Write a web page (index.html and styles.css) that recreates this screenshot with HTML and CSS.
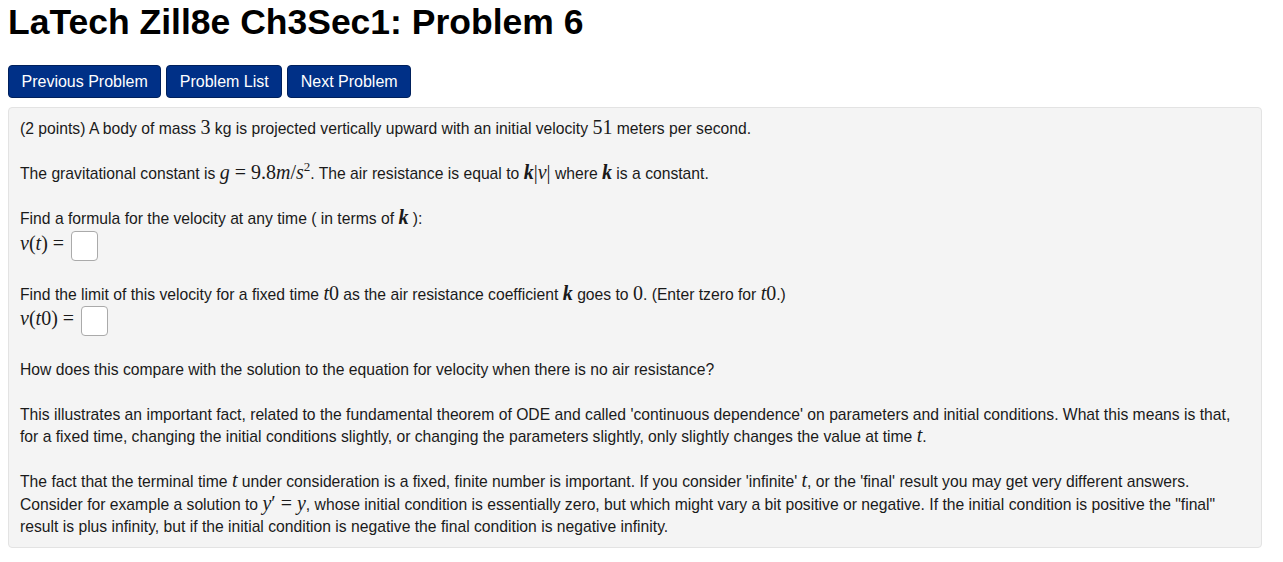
FILE: index.html
```html
<!DOCTYPE html>
<html lang="en">
<head>
  <meta charset="UTF-8" />
  <title>LaTech Zill8e Ch3Sec1: Problem 6</title>
  <link rel="stylesheet" href="styles.css">
</head>
<body>
  <h1 class="title">LaTech Zill8e Ch3Sec1: Problem 6</h1>

  <div class="nav">
    <a class="nav-btn" href="#">Previous Problem</a>
    <a class="nav-btn" href="#">Problem List</a>
    <a class="nav-btn" href="#">Next Problem</a>
  </div>

  <div class="problem">
    <p>(2 points) A body of mass <span class="m">3</span> kg is projected vertically upward with an initial velocity <span class="m">51</span> meters per second.</p>

    <p>The gravitational constant is <span class="m"><i>g</i><span class="eq">=</span>9.8<i>m</i>/<i>s</i><sup>2</sup></span>. The air resistance is equal to <span class="m"><b><i>k</i></b>|<i>v</i>|</span> where <span class="m"><b><i>k</i></b></span> is a constant.</p>

    <p>Find a formula for the velocity at any time ( in terms of <span class="m"><b><i>k</i></b></span> ):<br>
      <span class="m"><i>v</i>(<i>t</i>)<span class="eq">=</span></span><input class="answer" type="text"></p>

    <p>Find the limit of this velocity for a fixed time <span class="m"><i>t</i>0</span> as the air resistance coefficient <span class="m"><b><i>k</i></b></span> goes to <span class="m">0</span>. (Enter tzero for <span class="m"><i>t</i>0</span>.)<br>
      <span class="m"><i>v</i>(<i>t</i>0)<span class="eq">=</span></span><input class="answer" type="text"></p>

    <p>How does this compare with the solution to the equation for velocity when there is no air resistance?</p>

    <p>This illustrates an important fact, related to the fundamental theorem of ODE and called 'continuous dependence' on parameters and initial conditions. What this means is that, for a fixed time, changing the initial conditions slightly, or changing the parameters slightly, only slightly changes the value at time <span class="m"><i>t</i></span>.</p>

    <p>The fact that the terminal time <span class="m"><i>t</i></span> under consideration is a fixed, finite number is important. If you consider 'infinite' <span class="m"><i>t</i></span>, or the 'final' result you may get very different answers. Consider for example a solution to <span class="m"><i>y</i>&prime;<span class="eq">=</span><i>y</i></span>, whose initial condition is essentially zero, but which might vary a bit positive or negative. If the initial condition is positive the "final" result is plus infinity, but if the initial condition is negative the final condition is negative infinity.</p>
  </div>
</body>
</html>
```

FILE: styles.css
```css
body {
  font-family: "Liberation Sans", Arial, sans-serif;
  margin: 0;
  padding: 0 8px;
  background: #fff;
  color: #1a1a1a;
}
.title {
  font-size: 35.5px;
  font-weight: bold;
  color: #000;
  margin: 0;
  padding-top: 2px;
  line-height: 40px;
}
.nav {
  display: flex;
  gap: 5px;
  margin-top: 23px;
}
.nav-btn {
  display: block;
  background: #003087;
  color: #fff;
  text-decoration: none;
  font-size: 16px;
  line-height: 19px;
  padding: 6px 12.5px;
  border: 1px solid #00205c;
  border-radius: 4px;
}
.problem {
  margin: 9px 13px 0 0;
  background: #f4f4f4;
  border: 1px solid #e3e3e3;
  border-radius: 4px;
  padding: 10px 11px 9px;
  font-size: 15.7px;
  line-height: 22.2px;
}
.problem p {
  margin: 0 0 23px;
}
.problem p:last-child {
  margin-bottom: 0;
}
.m {
  font-family: "Liberation Serif", "Times New Roman", serif;
  font-size: 20px;
  line-height: 0;
}
.m .eq {
  margin: 0 5px;
}
.m sup {
  font-size: 13px;
  line-height: 0;
}
.answer {
  width: 25px;
  height: 28px;
  margin: 0 0 0 2px;
  padding: 0;
  border: 1px solid #aaa;
  border-radius: 4px;
  background: #fff;
  vertical-align: baseline;
}
```
